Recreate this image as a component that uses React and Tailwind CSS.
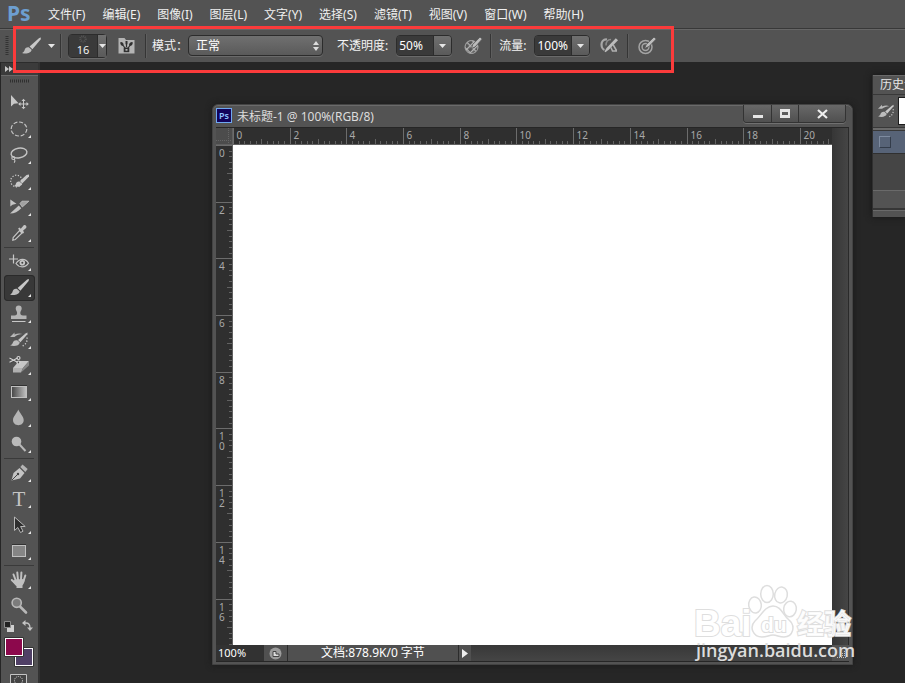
import { useEffect, useRef, useState } from "react";

const MENUS = [
  "文件(F)",
  "编辑(E)",
  "图像(I)",
  "图层(L)",
  "文字(Y)",
  "选择(S)",
  "滤镜(T)",
  "视图(V)",
  "窗口(W)",
  "帮助(H)",
];

// pixels per centimetre at 72 dpi
const CM = 28.346;

const BrushShape = () => (
  <>
    <path d="M25 4 23.2 4.6 13.6 13 16.4 15.8 24.6 6Z" fill="#c8c8c8" />
    <path
      d="M12.8 13.8c-2.4-.4-3.8 1-4.2 2.8-.3 1.4-1.2 2.4-2.6 2.8 3.6 1.3 9.2.4 9.6-3.2Z"
      fill="#bdbdbd"
    />
  </>
);

const HistoryBrushShape = () => (
  <>
    <path d="M6 10 10.5 5.5v2c3-1.4 6-1.4 8-.4-3 .2-5.400.8-8 2.900Z" fill="#b8b8b8" />
    <path d="M23.5 5.500 21.500 6.500 14 13l2.400 2.200 7-8Z" fill="#c8c8c8" />
    <path
      d="M13.200 13.300c-2.600-.5-4 1-4.500 2.700-.4 1.300-1.300 2-2.700 2.300 3.500 1.600 9.300.8 9.800-2.700Z"
      fill="#bdbdbd"
    />
    <path
      d="M23 10.500c.6 4-1.400 7.500-5.500 9"
      stroke="#d0d0d0"
      strokeWidth="1.300"
      strokeDasharray="1.200 1.800"
      fill="none"
    />
  </>
);

const TOOL_GROUPS = [
  [
    {
      name: "移动工具",
      plain: true,
      icon: (
        <>
          <path d="M7 5v11.500l3-2.800 4.500-.4Z" fill="#c8c8c8" />
          <path d="M19.500 10v8M15.500 14h8" stroke="#c8c8c8" />
          <path
            d="m19.500 8.700 2 2.300h-4ZM19.500 19.300l2-2.300h-4ZM14.200 14l2.300-2v4ZM24.800 14l-2.300-2v4Z"
            fill="#c8c8c8"
          />
        </>
      ),
    },
    {
      name: "椭圆选框工具",
      icon: (
        <ellipse
          cx="15"
          cy="13"
          rx="7.800"
          ry="7"
          fill="none"
          stroke="#c4c4c4"
          strokeWidth="1.200"
          strokeDasharray="4 1.800"
        />
      ),
    },
    {
      name: "套索工具",
      icon: (
        <g fill="none" stroke="#c4c4c4" strokeWidth="1.400">
          <ellipse cx="15" cy="11" rx="8" ry="4.800" transform="rotate(-10 15 11)" />
          <circle cx="9.300" cy="16" r="1.500" strokeWidth="1.100" />
          <path d="M10.400 17c.8 1.200.8 2.300-.2 3.800" strokeWidth="1.100" />
        </g>
      ),
    },
    {
      name: "快速选择工具",
      icon: (
        <>
          <circle
            cx="12.500"
            cy="13"
            r="5.800"
            fill="none"
            stroke="#d0d0d0"
            strokeWidth="1.200"
            strokeDasharray="1.200 1.600"
          />
          <path d="m25 6.500-2.500.6-6.500 6 2.200 2.400L25 8.500Z" fill="#c8c8c8" />
          <path
            d="M15.500 13.500c-2.300-.3-3.200 1-3.700 2.500-.3 1-1 1.600-1.800 2 3 1.300 7.500.6 8-2.300Z"
            fill="#c8c8c8"
          />
        </>
      ),
    },
    {
      name: "切片工具",
      icon: (
        <g fill="#c4c4c4">
          <path d="M6.300 5.500v7l2.200-1.700 4-1Z" />
          <path d="m16 9.500 2-2.300h6.800L18.300 13Z" fill="#a0a0a0" stroke="#c4c4c4" strokeWidth=".8" />
          <path d="m14.800 11.500 2.500 2.800c-3.300 3.600-6.800 5.100-11.300 5.300Z" />
        </g>
      ),
    },
    {
      name: "吸管工具",
      icon: (
        <>
          <path
            d="m15.500 10.500 2.500 2.500-6.700 6.500-2.500.6.4-2.600Z"
            fill="#4a4a4a"
            stroke="#c4c4c4"
            strokeWidth="1.200"
          />
          <path
            d="m14 8.800 1.400-1.200 1.400 1.100 2.700-3.200c1.500-1.400 3.900.9 2.600 2.500L19 10.800l1.100 1.500-1.200 1.400Z"
            fill="#c4c4c4"
          />
        </>
      ),
    },
  ],
  [
    {
      name: "红眼工具",
      icon: (
        <>
          <path d="M9.500 5.500v9M5 10h9" stroke="#c8c8c8" strokeWidth="1.200" />
          <path
            d="M12 14.500c3.500-5.500 9.500-5.500 12.500-.3-3.200 4.800-9.200 4.800-12.500.3Z"
            fill="#4a4a4a"
            stroke="#c4c4c4"
            strokeWidth="1.200"
          />
          <circle cx="18.300" cy="13.800" r="2.800" fill="#c8c8c8" />
          <circle cx="18.300" cy="13.800" r="1" fill="#444" />
        </>
      ),
    },
    { name: "画笔工具", icon: <BrushShape /> },
    {
      name: "仿制图章工具",
      icon: (
        <>
          <path
            d="M14.700 4.500a3 3 0 0 1 3 3c0 1.800-1.400 2.800-1.400 4.200 0 1.700.7 2.800 2.700 2.800h3.500V18h-15.500v-3.500h3.500c2 0 2.600-1.100 2.600-2.800 0-1.400-1.400-2.400-1.400-4.200a3 3 0 0 1 3-3Z"
            fill="#b4b4b4"
          />
          <path d="M8 20.500h13.500" stroke="#c8c8c8" />
        </>
      ),
    },
    { name: "历史记录画笔工具", icon: <HistoryBrushShape /> },
    {
      name: "背景橡皮擦工具",
      icon: (
        <>
          <path d="m9 15 6-7h10l-6 7Z" fill="#c6c6c6" />
          <path d="M9 15h10l-2 4.500H9Z" fill="#b0b0b0" />
          <path d="m19 15 6-7v4.500l-8 7Z" fill="#868686" />
          <path d="m6 5 9 5M6 9.500l9-5" stroke="#4a4a4a" strokeWidth="3" />
          <g fill="none" stroke="#d2d2d2" strokeWidth="1.200">
            <path d="m5.500 5 8 4.200M5.500 9.200l8-4.200" />
            <circle cx="14.500" cy="5" r="1.500" />
            <circle cx="14.500" cy="9.500" r="1.500" />
          </g>
        </>
      ),
    },
    {
      name: "渐变工具",
      icon: (
        <>
          <defs>
            <linearGradient id="tool-gradient">
              <stop offset="0" stopColor="#444" />
              <stop offset="1" stopColor="#c4c4c4" />
            </linearGradient>
          </defs>
          <rect x="7.500" y="7.500" width="15" height="11" fill="url(#tool-gradient)" stroke="#c0c0c0" />
          <path d="M7 6.500h16" stroke="#333" />
        </>
      ),
    },
    {
      name: "模糊工具",
      icon: (
        <path
          d="M14.300 4.500c1.200 3.500 5.400 6.700 5.400 10.500 0 3.200-2.400 5.200-5.300 5.200S9 18.200 9 15c0-3.800 4.200-7 5.300-10.500Z"
          fill="#b4b4b4"
        />
      ),
    },
    {
      name: "减淡工具",
      icon: (
        <>
          <path d="m15 13 6.500 7" stroke="#b8b8b8" strokeWidth="2" />
          <circle cx="12.500" cy="10.500" r="4.800" fill="#bababa" />
        </>
      ),
    },
  ],
  [
    {
      name: "钢笔工具",
      icon: (
        <>
          <path d="M7.500 20.500 9.500 13l6-5 5 5-4.500 5.500Z" fill="#c4c4c4" />
          <path d="m8 20 5.500-5.500" stroke="#444" />
          <circle cx="14" cy="14" r="1.200" fill="#444" />
          <path d="m16.300 7 2.200-2.600 5.200 4.500-2.400 3Z" fill="#b4b4b4" />
        </>
      ),
    },
    { name: "文字工具", glyph: "T" },
    {
      name: "路径选择工具",
      icon: (
        <path
          d="M10.500 5v13.500l3.300-3 2.700 5 2.500-1.300-2.400-4.700h4.600Z"
          fill="#2e2e2e"
          stroke="#b8b8b8"
        />
      ),
    },
    {
      name: "矩形工具",
      icon: (
        <>
          <rect x="8.500" y="7.500" width="13" height="11" fill="#858585" stroke="#c0c0c0" />
          <path d="M8 6.500h14" stroke="#333" />
        </>
      ),
    },
  ],
  [
    {
      name: "抓手工具",
      icon: (
        <>
          <path
            d="M12 14 9.500 7.500M14 13l-.7-7.500M17 13l.4-7.500M19.500 14l1.800-5.500M12.500 17.500 7.800 13"
            stroke="#c0c0c0"
            strokeWidth="2"
            strokeLinecap="round"
          />
          <path d="m11 12.500 9.600-.5c.2 3.200-1.100 5-2.100 6.500V21h-6v-2c-1.300-.8-2.700-3-4-4.500Z" fill="#c0c0c0" />
        </>
      ),
    },
    {
      name: "缩放工具",
      plain: true,
      icon: (
        <>
          <path d="m16 13.500 6 6" stroke="#b8b8b8" strokeWidth="2.600" strokeLinecap="round" />
          <circle cx="12.700" cy="9.800" r="4.600" fill="#7c7c7c" stroke="#b8b8b8" strokeWidth="1.600" />
        </>
      ),
    },
  ],
];

const Caret = () => (
  <svg width="7" height="4" viewBox="0 0 7 4">
    <path d="M0 0h7L3.500 4Z" fill="#e6e6e6" />
  </svg>
);

const Divider = () => (
  <div className="h-6 w-px shrink-0 bg-[#353535] shadow-[1px_0_0_#5e5e5e]" />
);

const Combo = ({ id, label, value, onChange }) => (
  <div className="flex shrink-0 items-center gap-2">
    <label htmlFor={id}>{label}</label>
    <div className="flex h-[21px] w-14 overflow-hidden rounded-sm border border-[#2c2c2c] shadow-[0_1px_0_#6a6a6a]">
      <input
        id={id}
        value={value}
        onChange={(e) => onChange(e.target.value)}
        className="w-9 min-w-0 bg-[#3a3a3a] pl-[2px] text-[12px] text-white outline-none"
      />
      <button
        aria-label={`${label}选项`}
        className="flex flex-1 items-center justify-center border-l border-[#2c2c2c] bg-linear-to-b from-[#707070] to-[#5a5a5a]"
      >
        <Caret />
      </button>
    </div>
  </div>
);

const MenuBar = () => (
  <nav className="flex h-7 shrink-0 items-center bg-[#535353] pb-0.5 pl-[7px]">
    <span className="mr-[17px] w-6 text-[21px] leading-6 font-bold text-[#6d9fd0]">Ps</span>
    <ul className="flex gap-[17px]">
      {MENUS.map((menu) => (
        <li key={menu}>
          <button className="text-[12px] leading-5 whitespace-nowrap text-[#f0f0f0]">
            {menu}
          </button>
        </li>
      ))}
    </ul>
  </nav>
);

const OptionsBar = () => {
  const [mode, setMode] = useState("正常");
  const [opacity, setOpacity] = useState("50%");
  const [flow, setFlow] = useState("100%");

  return (
    <div className="flex h-[34px] shrink-0 items-center overflow-hidden border-t border-[#383838] bg-[#535353] pl-[5px] text-[12px] whitespace-nowrap text-[#f4f4f4] shadow-[inset_0_1px_0_#666666]">
      <svg width="4" height="20" className="mr-[13px] shrink-0">
        <path d="M2 0v20" stroke="#333" strokeWidth="3" strokeDasharray="1 1" />
      </svg>
      <button aria-label="画笔预设" className="flex shrink-0 items-center gap-[7px]">
        <svg width="19" height="17" viewBox="6 4 19 16">
          <BrushShape />
        </svg>
        <Caret />
      </button>
      <div className="mr-[7px] ml-[5px] flex">
        <Divider />
      </div>
      <button
        aria-label="画笔大小"
        className="flex h-6 w-[39px] shrink-0 rounded-sm border border-[#2c2c2c] shadow-[0_1px_0_#6a6a6a]"
      >
        <span className="flex h-full w-7 shrink-0 flex-col items-center bg-[#3a3a3a]">
          <svg width="8" height="8" viewBox="0 0 9 9" className="shrink-0">
            <circle cx="4.500" cy="4.500" r="3" fill="none" stroke="#565656" strokeWidth="2.500" strokeDasharray="1 1" />
          </svg>
          <span className="text-[11px] leading-[13px]">16</span>
        </span>
        <span className="flex h-full flex-1 items-center justify-center border-l border-[#2c2c2c] bg-linear-to-b from-[#707070] to-[#5a5a5a]">
          <Caret />
        </span>
      </button>
      <button aria-label="切换画笔面板" className="mr-[10px] ml-[11px] shrink-0">
        <svg width="17" height="17" viewBox="0 0 17 17">
          <path d="M.5 1h6l1.500 2h8.500v13.500H.5Z" fill="#b4b4b4" />
          <path d="M8.500 10V7M7 11 4.800 8M10 11l2.400-3" stroke="#303030" strokeWidth="1.200" />
          <path
            d="M2 5.500 4 5l1.700 2-.7 2-2-.8ZM11.500 9l-.5-2 2-2 2 .5-1 2.700ZM7.500 4h2v3.300h-2Z"
            fill="#303030"
          />
          <path d="M5.700 10.500h5.600v4.700H5.700Z" fill="#303030" />
          <path d="M7.500 12h2v1.700h-2Z" fill="#b4b4b4" />
        </svg>
      </button>
      <Divider />
      <div className="ml-[6px] flex shrink-0 items-center">
        <label htmlFor="mode">模式：</label>
        <div className="relative w-[135px]">
          <select
            id="mode"
            value={mode}
            onChange={(e) => setMode(e.target.value)}
            className="block h-[21px] w-full appearance-none rounded-sm border border-[#2c2c2c] bg-linear-to-b from-[#707070] to-[#5a5a5a] pl-[7px] text-[12px] leading-4 text-white shadow-[0_1px_0_#6a6a6a] outline-none"
          >
            <option>正常</option>
            <option>溶解</option>
            <option>正片叠底</option>
          </select>
          <svg width="6" height="10" viewBox="0 0 6 10" className="pointer-events-none absolute top-[6px] right-1">
            <path d="M3 0 6 4H0ZM3 10 0 6h6Z" fill="#dcdcdc" />
          </svg>
        </div>
      </div>
      <div className="ml-[14px]">
        <Combo id="opacity" label="不透明度:" value={opacity} onChange={setOpacity} />
      </div>
      <button aria-label="不透明度压力" className="mr-[7px] ml-3 shrink-0">
        <svg width="19" height="19" viewBox="0 0 19 19">
          <defs>
            <pattern id="checker" width="5" height="5" patternUnits="userSpaceOnUse" patternTransform="rotate(45 7 11)">
              <path d="M0 0h5v5H0Z" fill="#555" />
              <path d="M0 0h5M0 0v5" stroke="#b4b4b4" strokeWidth="2.600" />
            </pattern>
          </defs>
          <circle cx="7.500" cy="11" r="6.500" fill="url(#checker)" stroke="#a8a8a8" />
          <path d="m7.500 12.500 1.200-4L16 1l2.300 2L11 11Z" fill="#bcbcbc" stroke="#535353" strokeWidth=".8" />
        </svg>
      </button>
      <Divider />
      <div className="ml-2">
        <Combo id="flow" label="流量:" value={flow} onChange={setFlow} />
      </div>
      <button aria-label="喷枪样式" className="mr-2 ml-[10px] shrink-0">
        <svg width="19" height="17" viewBox="0 0 19 17">
          <path d="M7 2.500C3 2 1.500 5 1.500 7.500S3 12.500 4.500 13" fill="none" stroke="#a8a8a8" strokeWidth="2.200" />
          <path d="M11 2.500C7.500 2.500 6 5 6 8.500" fill="none" stroke="#8c8c8c" strokeWidth="1.500" />
          <path d="m4.500 14.500 2-3.500L15.800 1.200 18 3.200 9 12.500l-3.500 2.800Z" fill="#bcbcbc" />
          <path d="m11 10.500 1.500 3.500h4.500M13 7.500l3.500 6" fill="none" stroke="#b0b0b0" strokeWidth="1.500" />
        </svg>
      </button>
      <Divider />
      <button aria-label="大小压力" className="ml-[10px] shrink-0">
        <svg width="19" height="19" viewBox="0 0 19 19">
          <g fill="none" stroke="#a4a4a4" strokeWidth="1.500">
            <circle cx="7.500" cy="11" r="6.500" />
            <circle cx="7.500" cy="11" r="3.400" />
          </g>
          <path d="m6.500 12.500 1.800-4L16 1l2.300 2L11 10.500Z" fill="#bcbcbc" stroke="#535353" strokeWidth=".8" />
        </svg>
      </button>
    </div>
  );
};

const Tool = ({ tool, active, onSelect }) => (
  <button
    aria-label={tool.name}
    onClick={onSelect}
    className={
      active
        ? "relative h-[26px] w-[31px] rounded-sm bg-[#383838] shadow-[inset_0_0_0_1px_#2a2a2a]"
        : "relative h-[26px] w-[31px]"
    }
  >
    {tool.glyph && (
      <span className="block pr-px font-['Liberation_Serif',serif] text-[21px] leading-[26px] text-[#c4c4c4]">
        {tool.glyph}
      </span>
    )}
    <svg viewBox="0 0 31 26" fill="none" className="absolute inset-0 size-full">
      {tool.icon}
      {!tool.plain && <path d="M27 19v3h-3Z" fill="#e6e6e6" />}
    </svg>
  </button>
);

const Toolbox = () => {
  const [active, setActive] = useState("画笔工具");

  return (
    <aside className="ml-px w-[39px] shrink-0 overflow-hidden border-r-2 border-[#333333] bg-[#535353]">
      <div className="flex h-[13px] items-center border-t border-[#2c2c2c] bg-[#3b3b3b] pl-1">
        <svg width="8" height="6" viewBox="0 0 8 6">
          <path d="M0 0 4 3 0 6ZM4 0l4 3-4 3Z" fill="#c8c8c8" />
        </svg>
      </div>
      <div className="flex h-[15px] justify-center border-t border-[#6a6a6a] pt-[3px]">
        <svg width="20" height="4">
          <path d="M0 2h20" stroke="#2f2f2f" strokeWidth="3" strokeDasharray="1 1" />
        </svg>
      </div>
      <div className="flex flex-col pl-[3px]">
        {TOOL_GROUPS.map((group, i) => (
          <div key={i} className="flex flex-col">
            {i > 0 && <div className="my-px mr-1 h-px bg-[#3a3a3a]" />}
            {group.map((tool) => (
              <Tool
                key={tool.name}
                tool={tool}
                active={tool.name === active}
                onSelect={() => setActive(tool.name)}
              />
            ))}
          </div>
        ))}
      </div>
      <svg width="36" height="64" viewBox="0 0 36 64" className="block">
        {/* default colours and swap */}
        <path d="M6 6h7v7H6Z" fill="#d0d0d0" />
        <path d="M3.500 2.500h6v6h-6Z" fill="#222" stroke="#8c8c8c" />
        <path d="M23 4h2c3 0 4 1.500 4 5" stroke="#c4c4c4" strokeWidth="1.300" fill="none" />
        <path d="m21 4 3.500-3v6ZM29 12l-3-3.500h6Z" fill="#c4c4c4" />
        {/* background and foreground */}
        <path d="M13.500 28.500h19v19h-19Z" fill="#fff" stroke="#333" />
        <path d="M15 30h16v16H15Z" fill="#504066" />
        <path d="M3.500 18.500h19v19h-19Z" fill="#fff" stroke="#333" />
        <path d="M5 20h16v16H5Z" fill="#8c084c" />
        {/* quick mask */}
        <path d="M9.500 55.500h16v12h-16Z" fill="#444" stroke="#c4c4c4" />
        <circle cx="17.500" cy="61.500" r="4" fill="none" stroke="#d6d6d6" strokeDasharray="1 1" />
      </svg>
    </aside>
  );
};

const useSize = () => {
  const ref = useRef(null);
  const [size, setSize] = useState({ width: 0, height: 0 });

  useEffect(() => {
    const measure = () =>
      setSize({
        width: ref.current.clientWidth,
        height: ref.current.clientHeight,
      });
    const observer = new ResizeObserver(measure);
    observer.observe(ref.current);
    measure();
    return () => observer.disconnect();
  }, []);

  return [ref, size];
};

// five ticks per centimetre, a number on every second one
const getTicks = (length) =>
  Array.from({ length: Math.ceil((length * 5) / CM) }, (_, i) => ({
    pos: Math.round((i * CM) / 5) + 0.5,
    major: i % 10 === 0,
    half: i % 5 === 0,
    label: String(i / 5),
  }));

const HorizontalRuler = () => {
  const [ref, { width }] = useSize();

  return (
    <div ref={ref} className="h-[17px] min-w-0 flex-1 overflow-hidden border-b border-[#606060] bg-[#2f2f2f]">
      <svg width={width} height="16" className="block">
        {getTicks(width).map((t) => (
          <g key={t.label}>
            <path
              d={`M${t.pos} ${t.major ? 0 : t.half ? 11 : 13}V16`}
              stroke={t.major ? "#6c6c6c" : "#626262"}
            />
            {t.major && (
              <text x={t.pos + 3} y="11" fontSize="10" fill="#a9a9a9">
                {t.label}
              </text>
            )}
          </g>
        ))}
      </svg>
    </div>
  );
};

const VerticalRuler = () => {
  const [ref, { height }] = useSize();

  return (
    <div ref={ref} className="relative w-[17px] shrink-0 overflow-hidden border-r border-[#606060] bg-[#2f2f2f]">
      <svg width="16" height={height} className="absolute top-0 left-0">
        {getTicks(height).map((t) => (
          <g key={t.label}>
            <path
              d={`M${t.major ? 0 : t.half ? 11 : 13} ${t.pos}H16`}
              stroke={t.major ? "#6c6c6c" : "#626262"}
            />
            {t.major &&
              t.label.split("").map((digit, i) => (
                <text key={i} x="3" y={t.pos + 11 + i * 10} fontSize="10" fill="#a9a9a9">
                  {digit}
                </text>
              ))}
          </g>
        ))}
      </svg>
    </div>
  );
};

const WINDOW_BUTTON =
  "flex items-center justify-center border-r border-[#333333] bg-linear-to-b from-[#686868] to-[#505050] last:border-r-0";

const DocumentWindow = () => (
  <section className="mt-[42px] mr-[19px] mb-[18px] ml-[172px] flex min-w-0 flex-1 flex-col rounded-t-md border border-[#434343] bg-[#535353] px-[3px] pb-[2px] shadow-[0_0_6px_#1a1a1a,inset_0_1px_0_#6a6a6a]">
    <header className="flex h-[22px] shrink-0 items-start">
      <span className="mt-[3px] flex h-[15px] w-4 shrink-0 items-center justify-center border border-[#6fa8f0] bg-[#12035a] text-[9px] font-semibold text-[#8fc4ff]">
        Ps
      </span>
      <h1 className="ml-[5px] flex-1 truncate text-[12px] leading-[23px] text-[#dcdcdc]">
        未标题-1 @ 100%(RGB/8)
      </h1>
      <div className="mr-[3px] flex h-[18px] w-[103px] shrink-0 overflow-hidden rounded-b-sm border border-t-0 border-[#333333] shadow-[0_1px_0_#707070]">
        <button aria-label="最小化" className={`${WINDOW_BUTTON} w-7`}>
          <svg width="10" height="10">
            <path d="M0 6h10v3H0Z" fill="#e6e6e6" />
          </svg>
        </button>
        <button aria-label="最大化" className={`${WINDOW_BUTTON} w-[27px]`}>
          <svg width="10" height="9">
            <path d="M0 0h10v9H0ZM2 3v3h6V3Z" fill="#e6e6e6" fillRule="evenodd" />
          </svg>
        </button>
        <button aria-label="关闭" className={`${WINDOW_BUTTON} flex-1`}>
          <svg width="11" height="10" viewBox="0 0 11 10">
            <path d="m1 1 9 8M10 1 1 9" stroke="#eeeeee" strokeWidth="2.200" />
          </svg>
        </button>
      </div>
    </header>

    <div className="flex min-h-0 flex-1 border-y border-[#262626]">
      <div className="flex min-w-0 flex-1 flex-col">
        <div className="flex shrink-0">
          <div className="h-[17px] w-[17px] shrink-0 border-r border-b border-[#606060] bg-[#4c4c4c]">
            <svg width="16" height="16">
              <path d="M12.500 0v16M0 12.500h16" stroke="#666" strokeDasharray="1 1" />
            </svg>
          </div>
          <HorizontalRuler />
        </div>
        <div className="flex min-h-0 flex-1">
          <VerticalRuler />
          <div className="flex-1 bg-white" />
        </div>
        <footer className="flex h-4 shrink-0 bg-linear-to-b from-[#383838] to-[#454545] text-[11px] leading-4 text-white">
          <label htmlFor="zoom" className="flex w-12 bg-[#323232]">
            <input
              id="zoom"
              aria-label="缩放"
              defaultValue="100%"
              className="w-full min-w-0 pl-[2px] outline-none"
            />
          </label>
          <button
            aria-label="文档信息"
            className="flex w-6 items-center justify-center border-r border-[#2c2c2c] bg-[#505050]"
          >
            <svg width="13" height="13" viewBox="0 0 13 13">
              <circle cx="6.500" cy="6.500" r="6" fill="#9c9c9c" />
              <path d="M4 9.500v-5h3V7h3v2.500Z" fill="#dcdcdc" stroke="#444" />
            </svg>
          </button>
          <span className="w-[170px] truncate bg-[#505050] text-center text-[12px]">
            文档:878.9K/0 字节
          </span>
          <button
            aria-label="状态栏菜单"
            className="flex w-[13px] items-center justify-center border-l border-[#2c2c2c] bg-[#505050]"
          >
            <svg width="6" height="9">
              <path d="M0 0 6 4.500 0 9Z" fill="#eeeeee" />
            </svg>
          </button>
        </footer>
      </div>
      <div className="flex w-[17px] shrink-0 flex-col justify-end bg-linear-to-r from-[#363636] to-[#464646] shadow-[inset_-1px_0_0_#2a2a2a]">
        <div className="flex h-4 items-end justify-end bg-[#535353] p-[3px]">
          <svg width="9" height="9">
            <path d="M0 8.500h9M3 6.500h6M5 4.500h4M7 2.500h2" stroke="#c0c0c0" strokeDasharray="1 1" />
          </svg>
        </div>
      </div>
    </div>
  </section>
);

const HistoryPanel = () => (
  <aside className="mt-[13px] w-[33px] shrink-0 self-start overflow-hidden border-l border-[#303030] bg-[#535353] text-[12px] whitespace-nowrap shadow-[0_0_6px_#161616]">
    <h2 className="h-5 border-t border-b border-t-[#6a6a6a] border-b-[#383838] pl-[7px] leading-[18px] text-[#e6e6e6]">
      历史记录
    </h2>
    <div className="flex h-8 items-center gap-[3px] pl-[5px]">
      <svg width="17" height="15" viewBox="6 5 19 16" className="shrink-0">
        <HistoryBrushShape />
      </svg>
      <div className="h-7 w-9 shrink-0 border border-[#1c1c1c] bg-white" />
    </div>
    <div className="h-1 border-y border-[#383838] bg-[#6a6a6a]" />
    <div className="flex h-[23px] items-center border-b border-[#303030] bg-[#576377] pl-[6px]">
      <input
        type="checkbox"
        aria-label="历史记录画笔的源"
        className="size-3 appearance-none border border-t-[#7e8ba0] border-r-[#333c4a] border-b-[#333c4a] border-l-[#7e8ba0]"
      />
    </div>
    <div className="h-9 bg-[#454545]" />
    <div className="h-5 border-t border-b-2 border-t-[#6a6a6a] border-b-[#363636]" />
    <div className="h-[7px] border-t border-[#6a6a6a]" />
  </aside>
);

const Watermark = () => (
  <svg
    width="162"
    height="82"
    viewBox="0 0 162 82"
    className="pointer-events-none absolute right-[50px] bottom-[18px]"
  >
    <g fill="#ffffff" fillOpacity=".9" stroke="#dedede" strokeWidth="1.500">
      <ellipse cx="62" cy="22" rx="6.300" ry="8" transform="rotate(-8 62 22)" />
      <ellipse cx="74" cy="11" rx="6.300" ry="8.500" />
      <ellipse cx="88" cy="12" rx="6.300" ry="8" transform="rotate(12 88 12)" />
      <ellipse cx="97" cy="26" rx="6.300" ry="7.800" transform="rotate(8 97 26)" />
      <path d="M80 23c8 0 10 9 16 14 7 6 4 17-5 17-5 0-7-2-11-2s-6 2-11 2c-9 0-13-10-7-16 6-5 10-15 18-15Z" />
    </g>
    <g fill="#ffffff" stroke="#dedede" strokeWidth="2" paintOrder="stroke" fontWeight="700">
      <text x="1" y="53" fontSize="37" fontFamily="Liberation Sans, sans-serif">
        Bai
      </text>
      <text x="68" y="49" fontSize="21" fontFamily="Liberation Sans, sans-serif">
        du
      </text>
      <text
        x="104"
        y="51"
        fontSize="27"
        fontFamily="Noto Sans CJK SC, sans-serif"
        fillOpacity=".9"
      >
        经验
      </text>
    </g>
    <text
      x="3"
      y="74"
      fontSize="18"
      fontWeight="600"
      fill="#dcdcdc"
      fontFamily="Open Sans, sans-serif"
    >
      jingyan.baidu.com
    </text>
  </svg>
);

const App = () => {
  return (
    <div className="relative flex h-screen flex-col overflow-hidden bg-[#262626] font-['Noto_Sans','Noto_Sans_CJK_SC',sans-serif]">
      <MenuBar />
      <OptionsBar />
      <main className="flex min-h-0 flex-1">
        <Toolbox />
        <DocumentWindow />
        <HistoryPanel />
      </main>
      <div className="pointer-events-none absolute top-[26px] left-[13px] h-[47px] w-[661px] border-3 border-[#fb3b3b]" />
      <Watermark />
    </div>
  );
};

export default App;
